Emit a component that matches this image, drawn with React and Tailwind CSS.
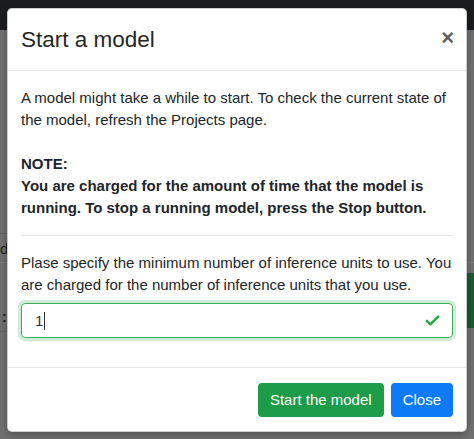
import React from "react";

function Check() {
  return (
    <svg width="17" height="17" viewBox="0 0 24 24" fill="none" stroke="#28a745" strokeWidth="3.6" strokeLinecap="round" strokeLinejoin="round">
      <path d="M4 12.5l5 5L20 6.5" />
    </svg>
  );
}

export default function App() {
  return (
    <div className="relative w-[474px] h-[439px] overflow-hidden bg-[#717171] font-['Liberation_Sans',Arial,Helvetica,sans-serif]">
      {/* page behind backdrop */}
      <div className="h-[30px] bg-[#1b1d20]" />
      <div className="absolute left-0 top-[233px] w-[8px] h-px bg-[#666]" />
      <div className="absolute left-0 top-[240px] text-[15px] leading-[18px] text-[#1e1e1e]">d</div>
      <div className="absolute left-0 top-[262px] w-[8px] h-px bg-[#7c7c7c]" />
      <div className="absolute left-[2px] top-[308px] text-[14px] leading-[18px] text-[#222] font-bold">:</div>
      <div className="absolute left-0 top-[331px] w-[8px] h-px bg-[#666]" />
      <div className="absolute right-0 top-[273px] w-[8px] h-[55px] bg-[#1c5a33]" />
      <div className="absolute right-0 top-[262px] w-[8px] h-px bg-[#7c7c7c]" />

      {/* modal */}
      <div className="absolute left-[7px] top-[8px] w-[460px] h-[424px] bg-white rounded-[5px] border border-[rgba(0,0,0,0.2)] shadow-[0_3px_8px_rgba(0,0,0,0.3)] flex flex-col text-[#212529]">
        <div className="h-[62px] shrink-0 border-b border-[#e4e6e8] flex items-center justify-between pl-[13px] pr-[12px]">
          <h4 className="text-[22.5px] leading-[27px] text-[#262626] font-normal">Start a model</h4>
          <span className="text-[22px] leading-none font-bold text-[#5f5f5f] -mt-[4px]">×</span>
        </div>
        <div className="flex-1 px-[13px] pt-[16px] text-[15px] leading-[22px]">
          <p>
            A model might take a while to start. To check the current state of the model, refresh the Projects page.
          </p>
          <p className="mt-[22px] font-bold">
            NOTE:
            <br />
            You are charged for the amount of time that the model is running. To stop a running model, press the Stop button.
          </p>
          <div className="mt-[16px] h-px bg-[#e6e6e6]" />
          <p className="mt-[16px]">
            Plase specify the minimum number of inference units to use. You are charged for the number of inference units that you use.
          </p>
          <div className="mt-[7px] h-[35px] rounded-[4px] border border-[#3dae5a] shadow-[0_0_0_3px_rgba(40,167,69,0.22)] flex items-center justify-between pl-[13px] pr-[11px]">
            <div className="flex items-center text-[15px] text-[#333]">
              <span>1</span>
              <span className="ml-[1px] w-px h-[18px] bg-[#333]" />
            </div>
            <Check />
          </div>
        </div>
        <div className="shrink-0 border-t border-[#e4e6e8] pt-[15px] pb-[14px] pr-[13px] flex justify-end gap-[7px]">
          <button className="h-[34px] px-[12px] rounded-[4px] bg-[#1c9c48] text-white text-[15px]">Start the model</button>
          <button className="h-[34px] px-[12px] rounded-[4px] bg-[#0d7bf5] text-white text-[15px]">Close</button>
        </div>
      </div>
    </div>
  );
}
